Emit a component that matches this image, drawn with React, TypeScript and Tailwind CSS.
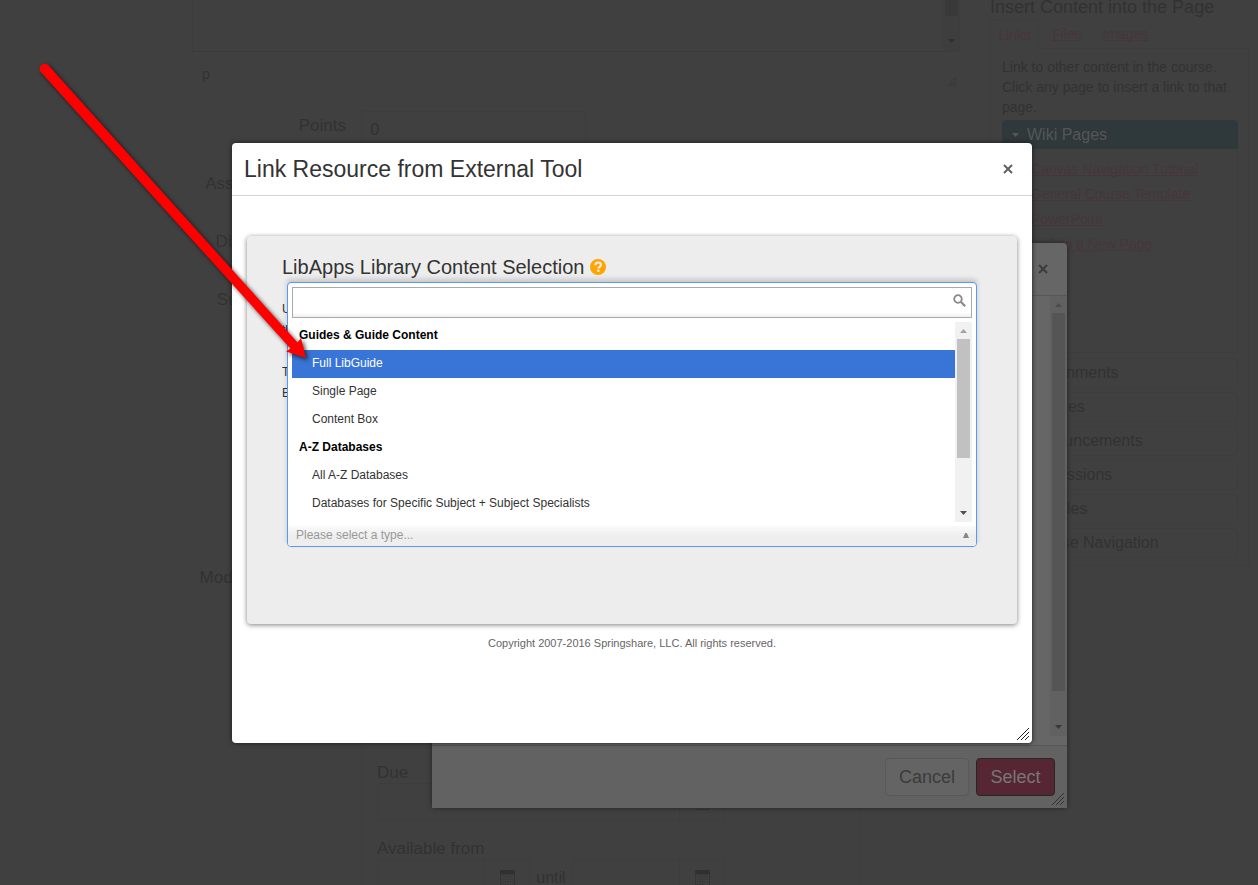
import React from "react";

const guideGroups = [
  { title: "Guides & Guide Content", options: ["Full LibGuide", "Single Page", "Content Box"] },
  { title: "A-Z Databases", options: ["All A-Z Databases", "Databases for Specific Subject + Subject Specialists"] },
];

const wikiPages = ["Canvas Navigation Tutorial", "General Course Template", "PowerPoint", "Link to a New Page"];
const sections = ["Assignments", "Quizzes", "Announcements", "Discussions", "Modules", "Course Navigation"];

function Triangle({ up = false, className = "" }: { up?: boolean; className?: string }) {
  return (
    <svg width="7" height="4" viewBox="0 0 7 4" className={className} fill="currentColor" aria-hidden="true">
      <path d={up ? "M0 4 3.5 0 7 4z" : "M0 0h7L3.5 4z"} />
    </svg>
  );
}

function CloseIcon() {
  return (
    <svg width="10" height="10" viewBox="0 0 10 10" stroke="currentColor" strokeWidth="2" aria-hidden="true">
      <path d="M1 1l8 8M9 1l-8 8" />
    </svg>
  );
}

function ResizeGrip() {
  return (
    <svg width="12" height="12" viewBox="0 0 12 12" fill="currentColor" shapeRendering="crispEdges" className="absolute right-[3px] bottom-[3px]" aria-hidden="true">
      <path d="M0 11h1v1H0zM1 10h1v1H1zM2 9h1v1H2zM3 8h1v1H3zM4 7h1v1H4zM5 6h1v1H5zM6 5h1v1H6zM7 4h1v1H7zM8 3h1v1H8zM9 2h1v1H9zM10 1h1v1h-1zM11 0h1v1h-1z" />
      <path d="M4 11h1v1H4zM5 10h1v1H5zM6 9h1v1H6zM7 8h1v1H7zM8 7h1v1H8zM9 6h1v1H9zM10 5h1v1h-1zM11 4h1v1h-1z" />
      <path d="M8 11h1v1H8zM9 10h1v1H9zM10 9h1v1h-1zM11 8h1v1h-1z" />
    </svg>
  );
}

function CalendarIcon() {
  return (
    <svg width="15" height="16" viewBox="0 0 15 16" aria-hidden="true">
      <rect x=".5" y=".5" width="14" height="15" rx="1.500" fill="none" stroke="#353535" />
      <rect x="0" y="0" width="15" height="4.500" rx="1.500" fill="#303030" />
      <path d="M3 6.500h9.500M2 9h11M2 11.500h11M2 14h7" stroke="#353535" strokeDasharray="1.500 1" />
    </svg>
  );
}

function DateField({ label, className }: { label: string; className: string }) {
  return (
    <div className={`flex h-[38px] rounded-sm border border-[#3d3d3d] ${className}`}>
      <input aria-label={label} className="min-w-0 flex-1 bg-transparent px-2 outline-none" />
      <button aria-label={`Pick a date: ${label}`} className="flex w-[45px] items-center justify-center border-l border-[#3d3d3d]">
        <CalendarIcon />
      </button>
    </div>
  );
}

function FormLabel({ children, htmlFor }: { children: React.ReactNode; htmlFor?: string }) {
  return (
    <label htmlFor={htmlFor} className="w-[154px] shrink-0 text-right leading-[30px] whitespace-nowrap">
      {children}
    </label>
  );
}

function AssignmentForm() {
  return (
    <main className="min-w-0 flex-1 pr-[30px] pl-[192px] text-[17px]">
      <div className="flex h-[52px] justify-end border-x border-b border-[#3c3c3c]">
        <div className="flex w-[16px] flex-col items-center justify-between bg-[#3e3e3e] pb-2">
          <div className="h-[16px] w-[13px] bg-[#393939]" />
          <Triangle className="text-[#303030]" />
        </div>
      </div>
      <div className="flex h-[59px] items-start justify-between pt-3 pr-[3px] pl-[10px] text-sm leading-5">
        <span>p</span>
        <svg width="10" height="10" viewBox="0 0 10 10" className="mt-[13px]" fill="#333" shapeRendering="crispEdges" aria-hidden="true">
          <path d="M8 0h1v1H8zM6 2h1v1H6zM8 2h1v1H8zM4 4h1v1H4zM6 4h1v1H6zM8 4h1v1H8zM2 6h1v1H2zM4 6h1v1H4zM6 6h1v1H6zM8 6h1v1H8zM0 8h1v1H0zM2 8h1v1H2zM4 8h1v1H4zM6 8h1v1H6zM8 8h1v1H8z" />
        </svg>
      </div>
      <div className="flex h-[58px] items-start gap-[15px]">
        <FormLabel htmlFor="points">Points</FormLabel>
        <input id="points" defaultValue="0" className="h-[38px] w-[225px] rounded-sm border border-[#3d3d3d] bg-transparent px-2 outline-none" />
      </div>
      <div className="flex h-[58px]"><FormLabel>Assignment Group</FormLabel></div>
      <div className="flex h-[58px]"><FormLabel>Display Grade as</FormLabel></div>
      <div className="flex h-[58px]"><FormLabel>Submission Type</FormLabel></div>
      <div className="mt-[220px] flex h-[58px]"><FormLabel>Moderated Grading</FormLabel></div>
      <section className="ml-[169px] w-[500px] border border-[#3d3d3d] px-[15px] pt-[141px]">
        <h3 className="leading-[20px]">Due</h3>
        <DateField label="Due" className="w-[348px]" />
        <h3 className="pt-[18px] leading-[20px]">Available from</h3>
        <div className="flex items-center">
          <DateField label="Available from" className="w-[153px]" />
          <span className="w-[42px] text-center text-base">until</span>
          <DateField label="Available until" className="w-[153px]" />
        </div>
      </section>
    </main>
  );
}

function ContentSidebar() {
  return (
    <aside className="w-[268px] shrink-0 pr-[9px]">
      <h2 className="h-[19px] text-[18px] leading-[14px] whitespace-nowrap">Insert Content into the Page</h2>
      <nav className="flex h-[30px] text-sm leading-[30px]">
        <a href="#links" className="z-10 w-[49px] rounded-t-sm border border-b-0 border-[#3d3d3d] bg-[#404040] text-center text-[#46363a]">Links</a>
        <a href="#files" className="ml-[13px] text-[#46363a] underline [text-decoration-skip-ink:none]">Files</a>
        <a href="#images" className="ml-[21px] text-[#46363a] underline [text-decoration-skip-ink:none]">Images</a>
      </nav>
      <div className="-mt-px border border-[#3d3d3d] pt-[8px] pr-[10px] pb-[7px] pl-[11px]">
        <p className="mb-[3px] text-sm leading-5">Link to other content in the course. Click any page to insert a link to that page.</p>
        <button className="flex h-[29px] w-full items-center gap-[8px] rounded-t-sm bg-[#2f383b] pl-[10px] text-base text-[#565656]">
          <Triangle />
          Wiki Pages
        </button>
        <ul className="flex min-h-[204px] flex-col border border-t-0 border-[#3d3d3d] pt-[8px] pl-[28px] text-sm leading-[25px] whitespace-nowrap">
          {wikiPages.map((p) => (
            <li key={p}>
              <a href="#page" className="text-[#46363a] underline [text-decoration-skip-ink:none]">{p}</a>
            </li>
          ))}
        </ul>
        <div className="mt-[5px] flex flex-col gap-[4px]">
          {sections.map((s) => (
            <button key={s} className="h-[30px] rounded-sm border border-[#3d3d3d] pl-[24px] text-left text-base">{s}</button>
          ))}
        </div>
      </div>
    </aside>
  );
}

function ToolDialog() {
  return (
    <div role="dialog" aria-label="External tools" className="relative flex min-h-[565px] w-full max-w-[635px] flex-col self-start rounded-sm bg-[#666] shadow-[0_0_5px_#222]">
      <div className="flex h-[53px] items-center justify-end border-b border-[#575757] pr-[19px] text-[#3c3c3c]">
        <button aria-label="Close tools"><CloseIcon /></button>
      </div>
      <div className="flex flex-1 justify-end pb-[9px]">
        <div className="flex w-[17px] flex-col items-center bg-[#616161] pb-[7px] text-[#4d4d4d]">
          <Triangle up className="mt-[7px] mb-[6px]" />
          <div className="h-[378px] w-[13px] bg-[#555]" />
          <Triangle className="mt-auto text-[#383838]" />
        </div>
      </div>
      <div className="flex h-[63px] items-start justify-end gap-[7px] border-t border-[#575757] bg-[#626262] pt-[12px] pr-[12px] text-[18px]">
        <button className="h-[38px] w-[84px] rounded-sm border border-[#595959] bg-[#646464] text-[#3b3b3b]">Cancel</button>
        <button className="h-[38px] w-[79px] rounded-sm border border-[#262626] bg-[#562635] text-[#777]">Select</button>
      </div>
      <div className="text-[#303030]"><ResizeGrip /></div>
    </div>
  );
}

function TypePicker() {
  return (
    <div className="absolute top-[46px] right-[40px] left-[40px] flex flex-col rounded-[4px] border border-[#5897fb] bg-white shadow-[0_-3px_5px_rgba(0,0,0,0.16)]">
      <div className="m-[4px] flex h-[31px] items-start border border-[#aaa] bg-gradient-to-b from-white from-85% to-[#eee]">
        <input aria-label="Search content types" className="h-full min-w-0 flex-1 bg-transparent px-2 text-[13px] outline-none" />
        <svg width="13" height="13" viewBox="0 0 13 13" className="mt-[6px] mr-[5px]" fill="none" stroke="#888" strokeWidth="1.800" aria-hidden="true">
          <circle cx="5" cy="5" r="3.800" />
          <path d="M8 8l4.200 4.200" strokeWidth="2.200" />
        </svg>
      </div>
      <div className="mx-[4px] flex h-[200px]">
        <div role="listbox" aria-label="Content types" className="min-w-0 flex-1 text-xs leading-[26px] text-[#333]">
          {guideGroups.map((g) => (
            <div key={g.title} role="group" aria-label={g.title}>
              <div className="h-[28px] pl-[7px] font-bold text-black">{g.title}</div>
              {g.options.map((o) => (
                <div
                  key={o}
                  role="option"
                  aria-selected={o === "Full LibGuide"}
                  className="h-[28px] pl-[20px] aria-selected:bg-[#3875d7] aria-selected:text-white"
                >
                  {o}
                </div>
              ))}
            </div>
          ))}
        </div>
        <div className="flex w-[17px] flex-col items-center bg-[#f1f1f1] pb-[7px] text-[#a3a3a3]">
          <Triangle up className="mt-[7px] mb-[6px]" />
          <div className="h-[119px] w-[13px] bg-[#c1c1c1]" />
          <Triangle className="mt-auto text-[#505050]" />
        </div>
      </div>
      <button aria-haspopup="listbox" aria-expanded="true" className="mt-[4px] flex h-[20px] items-center justify-between rounded-b-[3px] bg-gradient-to-b from-[#fafafa] to-[#eee] to-50% pr-[7px] pb-[2px] pl-[8px] text-xs text-[#999]">
        Please select a type...
        <svg width="6" height="5" viewBox="0 0 6 5" fill="#888" aria-hidden="true"><path d="M0 5 2.200 0h1.600L6 5z" /></svg>
      </button>
    </div>
  );
}

function PointerArrow() {
  return (
    <svg width="275" height="304" viewBox="0 0 275 304" className="pointer-events-none absolute top-[-81px] left-[-193px] drop-shadow-[2px_2px_2px_rgba(0,0,0,0.7)]" fill="#f00" aria-hidden="true">
      <path d="M1.900 10.300A5.200 5.200 0 0 1 9.700 3.400L258.500 280.500 262 276 267 296 247 289.500 251.500 286.500Z" />
    </svg>
  );
}

function LinkResourceDialog() {
  return (
    <div role="dialog" aria-label="Link Resource from External Tool" className="relative flex min-h-[600px] w-full max-w-[800px] flex-col self-start rounded-sm bg-white text-[#333] shadow-[0_0_5px_#1a1a1a]">
      <header className="flex h-[53px] items-center justify-between border-b border-[#d4d4d4] pr-[19px] pl-[12px]">
        <h1 className="text-[23px] leading-[50px]">Link Resource from External Tool</h1>
        <button aria-label="Close" className="text-[#606060]"><CloseIcon /></button>
      </header>
      <div className="px-[15px] pt-[40px]">
        <div className="relative min-h-[388px] rounded-[4px] bg-[#ededed] px-[35px] pt-[19px] shadow-[0_1px_5px_rgba(0,0,0,0.5)]">
          <h2 className="flex items-center gap-[6px] text-[20px] leading-6">
            LibApps Library Content Selection
            <svg width="16" height="16" viewBox="0 0 16 16" role="img" aria-label="Help">
              <circle cx="8" cy="8" r="8" fill="#ffa500" />
              <path d="M5.300 6.300C5.300 4.500 6.500 3.500 8.100 3.500s2.800 1 2.800 2.400c0 1.900-2.500 1.900-2.500 3.700" fill="none" stroke="#ededed" strokeWidth="2.100" />
              <path d="M7.200 10.700h2.300v2.100H7.200z" fill="#ededed" />
            </svg>
          </h2>
          <p className="pt-[20px] text-xs leading-[21px]">Use<br />the</p>
          <p className="pt-[21px] text-xs leading-[21px]">To<br />Ex</p>
          <TypePicker />
        </div>
        <p className="pt-[11px] text-center text-[11px] leading-4 text-[#666]">Copyright 2007-2016 Springshare, LLC. All rights reserved.</p>
      </div>
      <div className="text-[#222]"><ResizeGrip /></div>
      <PointerArrow />
    </div>
  );
}

export default function App() {
  return (
    <div className="relative h-screen overflow-hidden bg-[#404040] font-['Liberation_Sans',Arial,sans-serif] text-[#323232]">
      <div className="flex">
        <AssignmentForm />
        <ContentSidebar />
      </div>
      <div className="absolute inset-0 flex justify-center pt-[243px] pl-[241px]">
        <ToolDialog />
      </div>
      <div className="absolute inset-0 flex justify-center pt-[143px] pl-[6px]">
        <LinkResourceDialog />
      </div>
    </div>
  );
}
